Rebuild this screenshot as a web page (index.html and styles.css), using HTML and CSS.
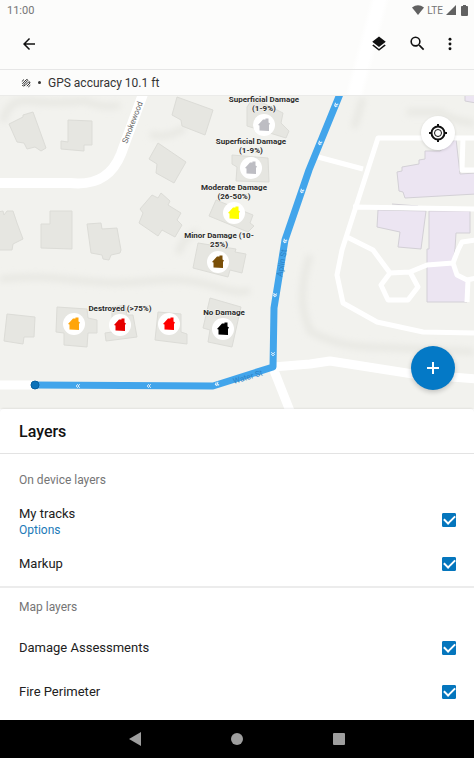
FILE: index.html
```html
<!DOCTYPE html>
<html lang="en">
<head>
<meta charset="utf-8">
<meta name="viewport" content="width=device-width, initial-scale=1">
<title>Layers</title>
<link rel="stylesheet" href="styles.css">
</head>
<body>
<div class="screen">
  <header class="top">
    <div class="status">
      <span>11:00</span>
      <div class="status-icons">
        <svg width="12" height="10" viewBox="0 0 12 10" aria-hidden="true"><path d="M6 10 0 2.6Q6-2.2 12 2.6Z"/></svg>
        <span>LTE</span>
        <svg width="10" height="10" viewBox="0 0 10 10" aria-hidden="true"><path d="M10 0V10H0Z"/></svg>
        <svg class="battery" width="7" height="11" viewBox="0 0 7 11" aria-hidden="true"><path d="M2 0H5V1H6.300Q7 1 7 2V10Q7 11 6 11H1Q0 11 0 10V2Q0 1 .7 1H2Z"/></svg>
      </div>
    </div>
    <div class="appbar">
      <button class="icon-btn" aria-label="Back"><svg width="18" height="18" viewBox="0 0 24 24"><path d="M20 11H7.830l5.590-5.590L12 4l-8 8 8 8 1.410-1.410L7.830 13H20z"/></svg></button>
      <div class="actions">
        <button class="icon-btn" aria-label="Layers"><svg width="18" height="18" viewBox="0 0 24 24"><path d="M12 18.540 4.620 12.810 3 14.070l9 7 9-7-1.630-1.270zM12 16l7.360-5.730L21 9l-9-7-9 7 1.630 1.270z"/></svg></button>
        <button class="icon-btn" aria-label="Search"><svg width="19" height="19" viewBox="0 0 24 24"><path d="M15.500 14h-.79l-.28-.27A6.470 6.470 0 0 0 16 9.500 6.500 6.500 0 1 0 9.500 16c1.610 0 3.090-.59 4.230-1.570l.27.28v.79l5 4.990L20.490 19zm-6 0a4.500 4.500 0 1 1 0-9 4.500 4.500 0 0 1 0 9z"/></svg></button>
        <button class="icon-btn more" aria-label="More options"><svg width="16" height="16" viewBox="0 0 24 24"><circle cx="12" cy="5" r="2.200"/><circle cx="12" cy="12" r="2.200"/><circle cx="12" cy="19" r="2.200"/></svg></button>
      </div>
    </div>
    <div class="gps">
      <svg width="10" height="10" viewBox="0 0 10 10" aria-hidden="true"><path d="M.8 3.600 3 1.500M1.300 5.900 5.200 1.800Q6.500.9 6.900 2.300L3 6.300Q2.300 7.800 4 7.500L7.300 4.200Q9.200 3 9 5L5.900 8.200M1.200 7 2.700 8.500M7.300 9 9.300 7.200"/></svg>
      <span class="dot"></span>
      <span>GPS accuracy 10.1 ft</span>
    </div>
  </header>

  <main class="map">
    <svg class="map-art" viewBox="0 96 474 313" preserveAspectRatio="xMidYMid slice" role="img" aria-label="Damage assessment map">
      <defs>
        <filter id="soft" x="-10%" y="-50%" width="120%" height="200%"><feGaussianBlur stdDeviation="3"/></filter>
        <path id="house" d="M-6 0-1-5.500H1.500V-6.500H4.500V-2.500L6-1.500 5 0V6L-4.500 5.500V.5Z"/>
        <path id="chev" d="M-.2-1.800-1.700 0-.2 1.800M1.700-1.800.2 0 1.700 1.800"/>
      </defs>
      <rect y="96" width="474" height="313" class="land"/>
      <g class="hills" filter="url(#soft)">
        <path d="M3 122Q8 98 30 101T85 101Q105 109 120 105"/>
        <path d="M0 279C60 272 90 288 150 281S230 299 250 290"/>
        <path d="M308 330Q335 346 370 347T474 352"/>
        <path d="M407 112H440Q455 122 474 123"/>
        <path d="M363 98 354 128"/>
        <path d="M310 255Q295 300 310 330"/>
        <path d="M178 254Q184 235 198 232M150 134Q165 140 185 128"/>
      </g>
      <g class="building">
        <path d="M9 124 23 117V115L33 112 46 148 41 151 35 147 27 149 24 143 17 142Z"/>
        <path d="M68 120 92 121V145H84V151L61 149V141L68 142Z"/>
        <path d="M-2 212 3 211 4 215 7 211H13L17 223 23 239 13 244 12 250H-2Z"/>
        <path d="M50 211H72V249L41 248V224H50Z"/>
        <path d="M87 224 101 223 102 229 117 228 121 250 120 253 111 255 109 260 103 259 102 255 91 253Z"/>
        <path d="M158 143 186 162 174 183 156 173 157 164 149 159Z"/>
        <path d="M152 195 158 198 161 193 170 201 168 205 181 213 177 220 182 225 175 237 162 230 158 236 139 223 143 213 140 209Z"/>
        <path d="M177 97 213 110 205 135 182 126 181 120 172 115Z"/>
        <path d="M247 107 253 98 283 113 281 123 289 131 286 138 247 126Z"/>
        <path d="M232 155 268 158 269 182 236 181 237 167 232 164Z"/>
        <path d="M216 200 253 215 250 223 254 226 248 232 209 216Z"/>
        <path d="M198 243 236 249 235 252 246 254 242 273 230 270 228 277 193 268Z"/>
        <path d="M7 314 35 317 34 337H24L23 344 4 341Z"/>
        <path d="M57 307 87 309 88 318 97 320V333H88L87 347 64 345V333L56 332Z"/>
        <path d="M112 307 125 305 127 315H133L137 337 106 341 105 333 112 332Z"/>
        <path d="M158 312 181 314V332L187 334V344L155 340Z"/>
        <path d="M210 298 241 307 232 347 208 342 210 330 203 328Z"/>
      </g>
      <g class="campus">
        <path d="M425 151H440L456 139 460 174 476 173V194L405 198 403 192 399 191 397 172 402 171V167L419 164V160L425 159Z"/>
        <path d="M378 210 426 211 421 249 398 247 400 232 377 227Z"/>
        <path d="M429 211H470V233H456L455 249 453 262 457 276 467 280V302H427V249H429Z"/>
        <path d="M465 94H476V103L465 101Z"/>
        <path d="M392 204 418 206"/>
      </g>
      <g class="road">
        <path d="M-2 183H70C98 186 113 174 121 154L143 94" class="wide"/>
        <path d="M-2 385H36" class="mid"/>
        <path d="M273 368 290 411M273 367 310 364 330 361 413 374 476 379" class="mid"/>
        <path d="M318 157 363 169M476 138H378L342 250 337 275 343 303 377 322 423 332 476 333M353 207 476 209M347 237 373 250 390 273 410 272 427 265 453 263M390 273 410 272 418 287 408 300H388L381 285ZM476 240 462 242 458 250 453 263 457 275 467 280 476 278M468 280 467 302M463 138 462 170H476"/>
      </g>
      <text class="street" transform="translate(127 144) rotate(-69)">Smokewood</text>
      <path class="track" d="M340 94 309 170 285 240 274 308 273 367 213 386 34 385"/>
      <text class="street on-track" transform="translate(234 384) rotate(-17)">Water St</text>
      <text class="street on-track" transform="translate(282 277) rotate(-80)">Aplin St</text>
      <g class="chevs">
        <use href="#chev" x="78" y="386"/><use href="#chev" x="149" y="386"/>
        <use href="#chev" transform="translate(217 384) rotate(-17)"/>
        <use href="#chev" transform="translate(273 354) rotate(-90)"/>
        <use href="#chev" transform="translate(275 295) rotate(-82)"/>
        <use href="#chev" transform="translate(285 241) rotate(-72)"/>
        <use href="#chev" transform="translate(302 191) rotate(-70)"/>
        <use href="#chev" transform="translate(320 143) rotate(-68)"/>
        <use href="#chev" transform="translate(336 105) rotate(-68)"/>
      </g>
      <circle class="here" cx="35" cy="385" r="4"/>
      <g class="pins">
        <circle cx="264" cy="125" r="11"/><circle cx="251" cy="168" r="11"/><circle cx="234" cy="213" r="11"/><circle cx="218" cy="262" r="11"/>
        <circle cx="74" cy="324" r="11"/><circle cx="120" cy="325" r="11"/><circle cx="169" cy="324" r="11"/><circle cx="223" cy="329" r="11"/>
      </g>
      <use href="#house" x="264" y="125" fill="#bdbdc3"/>
      <use href="#house" x="251" y="168" fill="#bdbdc3"/>
      <use href="#house" x="234" y="213" fill="#ffff00"/>
      <use href="#house" x="218" y="262" fill="#7a4f08"/>
      <use href="#house" x="74" y="324" fill="#ffa50a"/>
      <use href="#house" x="120" y="325" fill="#e60000"/>
      <use href="#house" x="169" y="324" fill="#ff0000"/>
      <use href="#house" x="223" y="329" fill="#000"/>
      <g class="labels">
        <text x="264" y="102">Superficial Damage<tspan x="264" dy="9">(1-9%)</tspan></text>
        <text x="251" y="144">Superficial Damage<tspan x="251" dy="9">(1-9%)</tspan></text>
        <text x="234" y="190">Moderate Damage<tspan x="234" dy="9">(26-50%)</tspan></text>
        <text x="219" y="238">Minor Damage (10-<tspan x="219" dy="9">25%)</tspan></text>
        <text x="120" y="311">Destroyed (&gt;75%)</text>
        <text x="224" y="315">No Damage</text>
      </g>
    </svg>
    <button class="locate" aria-label="My location"><svg width="18" height="18" viewBox="0 0 18 18"><circle cx="9" cy="9" r="6.500"/><circle cx="9" cy="9" r="3.500"/><path d="M9 0V3M9 15V18M0 9H3M15 9H18"/></svg></button>
    <button class="fab" aria-label="Add"><svg width="12" height="12" viewBox="0 0 12 12"><path d="M6 0V12M0 6H12"/></svg></button>
  </main>

  <section class="sheet">
    <h1>Layers</h1>
    <div class="group">
      <h2 class="first">On device layers</h2>
      <div class="row">
        <div class="names"><label for="tracks">My tracks</label><a href="#options">Options</a></div>
        <input type="checkbox" id="tracks" checked>
      </div>
      <div class="row"><label for="markup">Markup</label><input type="checkbox" id="markup" checked></div>
    </div>
    <div class="group">
      <h2>Map layers</h2>
      <div class="row"><label for="damage">Damage Assessments</label><input type="checkbox" id="damage" checked></div>
      <div class="row"><label for="fire">Fire Perimeter</label><input type="checkbox" id="fire" checked></div>
    </div>
  </section>

  <nav class="navbar">
    <button aria-label="Back"><svg width="12" height="14" viewBox="0 0 12 14"><path d="M12 0V14L0 7Z"/></svg></button>
    <button aria-label="Home"><svg width="12" height="12" viewBox="0 0 12 12"><circle cx="6" cy="6" r="6"/></svg></button>
    <button aria-label="Recent apps"><svg width="12" height="12" viewBox="0 0 12 12"><rect width="12" height="12" rx="1"/></svg></button>
  </nav>
</div>
</body>
</html>
```
FILE: styles.css
```css
* { box-sizing: border-box; }
body { margin: 0; font-family: Roboto, "Liberation Sans", sans-serif; font-size: 13px; color: #212121; background: #fff; }
button { border: 0; padding: 0; background: none; display: flex; align-items: center; justify-content: center; cursor: pointer; }
svg { display: block; }
h1, h2 { margin: 0; }

.screen { min-height: 100vh; display: flex; flex-direction: column; }

.top { background: linear-gradient(105deg, #fcfcfb 74%, #fff 75%, #fff 77%, #fcfcfb 78%); }
.status { display: flex; justify-content: space-between; align-items: center; height: 20px; padding: 0 6px 0 7px; font-size: 11px; color: #757575; }
.status-icons { display: flex; align-items: center; gap: 3px; font-size: 10px; }
.status-icons svg { fill: #616161; }
.status-icons .battery { margin-left: 2px; }
.appbar { display: flex; justify-content: space-between; align-items: center; height: 50px; padding: 0 10px 2px; border-bottom: 1px solid #e6e6e6; }
.actions { display: flex; }
.icon-btn { width: 38px; height: 36px; }
.icon-btn.more { width: 28px; }
.icon-btn svg { fill: #111; }
.gps { display: flex; align-items: center; height: 26px; padding: 0 21px; font-size: 12px; color: #333; border-bottom: 1px solid #ebebe9; }
.gps svg { fill: none; stroke: #333; stroke-width: 1; }
.gps .dot { width: 3px; height: 3px; margin: 0 7px; border-radius: 50%; background: #333; }

.map { position: relative; flex: 1 0 auto; overflow: hidden; background: #f2f2ee; }
.map-art { width: 100%; height: auto; }
.land { fill: #f2f2ee; }
.hills { fill: none; stroke: #e8e8e3; stroke-width: 7; }
.building { fill: #e6e6e1; stroke: #dcdcd7; stroke-width: 1; }
.campus { fill: #ece5f2; stroke: #d3d0d6; stroke-width: 1; }
.road { fill: none; stroke: #fff; stroke-width: 5; stroke-linejoin: round; }
.road .wide { stroke-width: 10; }
.road .mid { stroke-width: 9; }
.track { fill: none; stroke: #42a5eb; stroke-width: 7; stroke-linejoin: round; }
.chevs { fill: none; stroke: #e6f3fd; stroke-width: 1; }
.here { fill: #0b72b9; stroke: #075f9e; stroke-width: 1; }
.pins { fill: #fff; }
.street { font-size: 8px; fill: #666; }
.on-track { fill: #2c82c6; }
.labels { font-size: 8px; font-weight: 700; fill: #2c2c2c; text-anchor: middle; paint-order: stroke; stroke: #f6f6f3; stroke-width: 1; }
.locate { position: absolute; right: 19px; top: 20px; width: 34px; height: 34px; border-radius: 50%; background: #fff; box-shadow: 0 1px 3px #0002; }
.locate svg { fill: none; stroke: #111; stroke-width: 2; }
.locate svg circle + circle { stroke-width: 1; }
.fab { position: absolute; right: 19px; bottom: 19px; width: 44px; height: 44px; border-radius: 50%; background: #0479c6; box-shadow: 0 2px 5px #0003; }
.fab svg { stroke: #fff; stroke-width: 2; }

.sheet { position: relative; background: #fff; padding-bottom: 6px; box-shadow: 0 -1px 2px #0001; border-radius: 4px 4px 0 0; }
.sheet h1 { padding: 12px 19px 10px; font-size: 16px; line-height: 22px; font-weight: 500; color: #111; border-bottom: 1px solid #e3e3e3; }
.group + .group { border-top: 2px solid #ececec; }
.group h2 { padding: 11px 19px; font-size: 12px; line-height: 16px; font-weight: 400; color: #757575; }
.group h2.first { padding-top: 18px; padding-bottom: 10px; }
.row { display: flex; align-items: center; justify-content: space-between; min-height: 44px; padding: 0 18px 0 19px; line-height: 16px; }
.names { display: flex; flex-direction: column; padding-top: 4px; }
.names a { font-size: 12px; color: #1b7ab8; text-decoration: none; }
.row input { appearance: none; display: grid; place-items: center; width: 14px; height: 14px; margin: 0; border-radius: 1px; background: #fff; border: 1px solid #0576bd; }
.row input:checked { background: #0576bd; }
.row input:checked::after { content: ""; width: 5px; height: 9px; margin-top: -3px; border: solid #fff; border-width: 0 2px 2px 0; transform: rotate(45deg); }

.navbar { display: flex; justify-content: center; align-items: center; gap: 66px; height: 38px; background: #000; }
.navbar button { width: 36px; height: 36px; }
.navbar svg { fill: #9e9e9e; }
```
